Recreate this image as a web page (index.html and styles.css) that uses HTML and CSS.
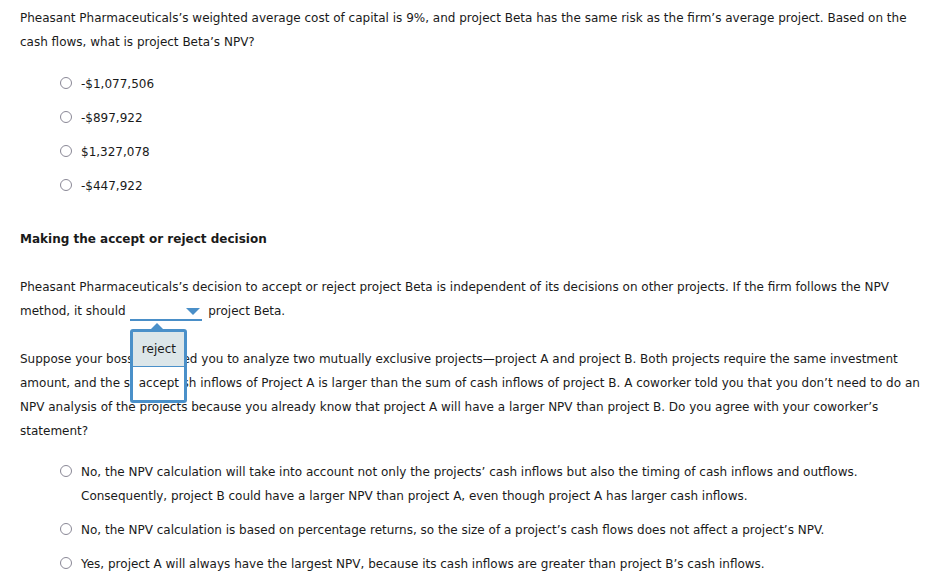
FILE: index.html
```html
<!DOCTYPE html>
<html>
<head>
<meta charset="utf-8">
<link rel="stylesheet" href="styles.css">
</head>
<body>
<div class="page">
  <p class="para">Pheasant Pharmaceuticals’s weighted average cost of capital is 9%, and project Beta has the same risk as the firm’s average project. Based on the cash flows, what is project Beta’s NPV?</p>
  <ul class="choices short">
    <li><span class="radio"></span><span>-$1,077,506</span></li>
    <li><span class="radio"></span><span>-$897,922</span></li>
    <li><span class="radio"></span><span>$1,327,078</span></li>
    <li><span class="radio"></span><span>-$447,922</span></li>
  </ul>
  <h3 class="heading">Making the accept or reject decision</h3>
  <p class="para para2">Pheasant Pharmaceuticals’s decision to accept or reject project Beta is independent of its decisions on other projects. If the firm follows the NPV method, it should <span class="select"><span class="caret"></span><span class="menu"><span class="item sel">reject</span><span class="item">accept</span></span></span> project Beta.</p>
  <p class="para para3">Suppose your boss has asked you to analyze two mutually exclusive projects—project A and project B. Both projects require the same investment amount, and the sum of cash inflows of Project A is larger than the sum of cash inflows of project B. A coworker told you that you don’t need to do an NPV analysis of the projects because you already know that project A will have a larger NPV than project B. Do you agree with your coworker’s statement?</p>
  <ul class="choices long">
    <li><span class="radio"></span><span>No, the NPV calculation will take into account not only the projects’ cash inflows but also the timing of cash inflows and outflows. Consequently, project B could have a larger NPV than project A, even though project A has larger cash inflows.</span></li>
    <li><span class="radio"></span><span>No, the NPV calculation is based on percentage returns, so the size of a project’s cash flows does not affect a project’s NPV.</span></li>
    <li><span class="radio"></span><span>Yes, project A will always have the largest NPV, because its cash inflows are greater than project B’s cash inflows.</span></li>
  </ul>
</div>
</body>
</html>
```
FILE: styles.css
```css
html, body {
  margin: 0;
  padding: 0;
  background: #fff;
}
body {
  font-family: "DejaVu Sans", Verdana, sans-serif;
  font-size: 12px;
  line-height: 24px;
  color: #1a1a1a;
}
.page {
  padding: 6px 0 0 20px;
}
.para {
  margin: 0;
}
.choices {
  list-style: none;
  margin: 0;
  padding: 0 0 0 40px;
}
.choices li {
  display: flex;
  align-items: flex-start;
  padding-right: 60px;
}
.radio {
  flex: none;
  width: 10px;
  height: 10px;
  border: 1.5px solid #8a8896;
  border-radius: 50%;
  margin: 5px 9px 0 0;
}
.short {
  margin-top: 18px;
}
.short li {
  margin-bottom: 10px;
}
.heading {
  margin: 29px 0 0 0;
  font-size: 12px;
  font-weight: bold;
}
.para2 {
  margin-top: 24px;
}
.select {
  position: relative;
  display: inline-block;
  width: 72px;
  height: 16px;
  border-bottom: 2px solid #4a8fc8;
  vertical-align: -6px;
  margin: 0 2px 0 1px;
}
.caret {
  position: absolute;
  right: 2px;
  top: 5px;
  width: 0;
  height: 0;
  border-left: 7px solid transparent;
  border-right: 7px solid transparent;
  border-top: 7px solid #4a8fc8;
}
.menu {
  position: absolute;
  left: 0;
  top: 26px;
  width: 51px;
  border: 3px solid #4a90c9;
  border-radius: 3px;
  background: #fff;
  display: flex;
  flex-direction: column;
  z-index: 2;
}
.menu::before {
  content: "";
  position: absolute;
  left: 18px;
  top: -9px;
  border-left: 6px solid transparent;
  border-right: 6px solid transparent;
  border-bottom: 6px solid #4a90c9;
}
.item {
  display: block;
  text-align: center;
  height: 33px;
  line-height: 33px;
  color: #1a1a1a;
}
.item.sel {
  background: #dce6e9;
  border-bottom: 1px solid #4a90c9;
  height: 34px;
  line-height: 34px;
}
.para3 {
  margin-top: 24px;
}
.long {
  margin-top: 17px;
}
.long li {
  margin-bottom: 10px;
}
```
